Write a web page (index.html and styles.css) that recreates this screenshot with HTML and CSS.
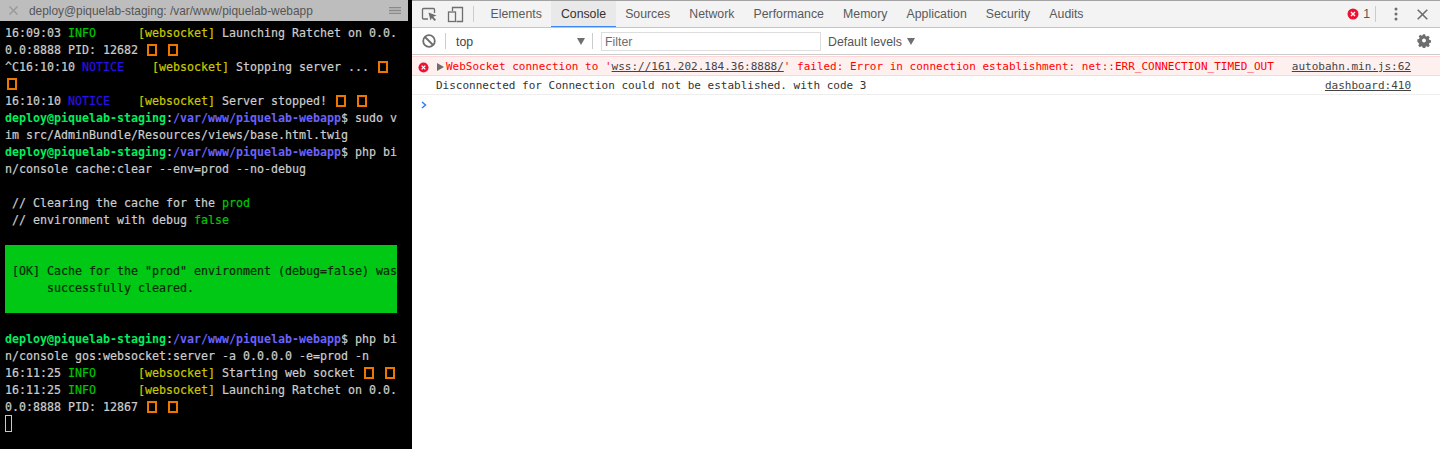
FILE: index.html
```html
<!DOCTYPE html>
<html lang="en">
<head>
<meta charset="utf-8">
<title>Terminal and DevTools</title>
<link rel="stylesheet" href="styles.css">
</head>
<body>
<div class="app">
  <section class="term">
    <header class="term-bar">
      <svg class="term-x" width="9" height="9" viewBox="0 0 9 9"><path d="M.5.5l8 8M8.500.5l-8 8" stroke="#9b9b9b" stroke-width="1.500"/></svg>
      <span class="term-title">deploy@piquelab-staging: /var/www/piquelab-webapp</span>
      <svg class="term-menu" width="12" height="7" viewBox="0 0 12 7"><path d="M0 .7h12M0 3.500h12M0 6.300h12" stroke="#8a8a8a" stroke-width="1.300"/></svg>
    </header>
    <div class="term-body">
      <div class="ln">16:09:03 <span class="g">INFO</span>      <span class="y">[websocket]</span> Launching Ratchet on 0.0.</div>
      <div class="ln">0.0:8888 PID: 12682 <i class="sq"></i> <i class="sq"></i></div>
      <div class="ln">^C16:10:10 <span class="b">NOTICE</span>    <span class="y">[websocket]</span> Stopping server ... <i class="sq"></i></div>
      <div class="ln"><i class="sq"></i></div>
      <div class="ln">16:10:10 <span class="b">NOTICE</span>    <span class="y">[websocket]</span> Server stopped! <i class="sq"></i> <i class="sq"></i></div>
      <div class="ln"><b class="u">deploy@piquelab-staging</b>:<b class="p">/var/www/piquelab-webapp</b>$ sudo v</div>
      <div class="ln">im src/AdminBundle/Resources/views/base.html.twig</div>
      <div class="ln"><b class="u">deploy@piquelab-staging</b>:<b class="p">/var/www/piquelab-webapp</b>$ php bi</div>
      <div class="ln">n/console cache:clear --env=prod --no-debug</div>
      <div class="ln"> </div>
      <div class="ln"> // Clearing the cache for the <span class="g">prod</span></div>
      <div class="ln"> // environment with debug <span class="g">false</span></div>
      <div class="ln"> </div>
      <div class="ok">
        <div class="ln"> </div>
        <div class="ln"> [OK] Cache for the "prod" environment (debug=false) was</div>
        <div class="ln">      successfully cleared.</div>
        <div class="ln"> </div>
      </div>
      <div class="ln"> </div>
      <div class="ln"><b class="u">deploy@piquelab-staging</b>:<b class="p">/var/www/piquelab-webapp</b>$ php bi</div>
      <div class="ln">n/console gos:websocket:server -a 0.0.0.0 -e=prod -n</div>
      <div class="ln">16:11:25 <span class="g">INFO</span>      <span class="y">[websocket]</span> Starting web socket <i class="sq"></i> <i class="sq"></i></div>
      <div class="ln">16:11:25 <span class="g">INFO</span>      <span class="y">[websocket]</span> Launching Ratchet on 0.0.</div>
      <div class="ln">0.0:8888 PID: 12867 <i class="sq"></i> <i class="sq"></i></div>
      <div class="ln"><i class="cursor"></i></div>
    </div>
  </section>
  <section class="dt">
    <nav class="dt-tabs">
      <svg class="ic-inspect" width="17" height="17" viewBox="0 0 17 17"><path d="M7 13H2.500a1 1 0 0 1-1-1V3.500a1 1 0 0 1 1-1h10a1 1 0 0 1 1 1V7" fill="none" stroke="#6e6e6e" stroke-width="1.300"/><path d="M7.500 6.500l8 3-3.300 1.300 2.800 3-1.400 1.300-2.800-3L9.500 14.500z" fill="#6e6e6e"/></svg>
      <svg class="ic-device" width="17" height="17" viewBox="0 0 17 17"><path d="M5.500 5V1.500h10v14h-6" fill="none" stroke="#6e6e6e" stroke-width="1.300"/><rect x="1.500" y="6" width="7" height="9.500" fill="none" stroke="#6e6e6e" stroke-width="1.300"/></svg>
      <span class="vsep"></span>
      <a class="tab">Elements</a>
      <a class="tab active">Console</a>
      <a class="tab">Sources</a>
      <a class="tab">Network</a>
      <a class="tab">Performance</a>
      <a class="tab">Memory</a>
      <a class="tab">Application</a>
      <a class="tab">Security</a>
      <a class="tab">Audits</a>
      <span class="grow"></span>
      <svg class="err-dot" width="12" height="12" viewBox="0 0 12 12"><circle cx="6" cy="6" r="5.500" fill="#ee1133"/><path d="M4 4l4 4M8 4l-4 4" stroke="#fff" stroke-width="1.400"/></svg>
      <span class="err-count">1</span>
      <span class="vsep vsep-r"></span>
      <svg class="ic-more" width="4" height="14" viewBox="0 0 4 14"><circle cx="2" cy="2" r="1.500" fill="#6e6e6e"/><circle cx="2" cy="7" r="1.500" fill="#6e6e6e"/><circle cx="2" cy="12" r="1.500" fill="#6e6e6e"/></svg>
      <svg class="ic-close" width="11" height="11" viewBox="0 0 11 11"><path d="M.7.7l9.600 9.600M10.300.7L.7 10.300" stroke="#6e6e6e" stroke-width="1.600"/></svg>
    </nav>
    <div class="dt-tools">
      <svg class="ic-clear" width="14" height="14" viewBox="0 0 14 14"><circle cx="7" cy="7" r="5.800" fill="none" stroke="#6e6e6e" stroke-width="1.800"/><path d="M3 3l8 8" stroke="#6e6e6e" stroke-width="1.800"/></svg>
      <span class="vsep vsep-t1"></span>
      <span class="ctx">top</span>
      <span class="tri tri-ctx"></span>
      <span class="vsep vsep-t2"></span>
      <span class="filter">Filter</span>
      <span class="levels">Default levels</span>
      <span class="tri tri-lv"></span>
      <span class="grow"></span>
      <svg class="ic-gear" width="14" height="14" viewBox="0 0 14 14"><path fill="#6e6e6e" fill-rule="evenodd" d="M5.700 0h2.600l.4 1.900 1.300.6 1.700-1 1.800 1.800-1 1.700.6 1.300 1.900.4v2.600l-1.900.4-.6 1.300 1 1.700-1.800 1.800-1.700-1-1.300.6-.4 1.900H5.700l-.4-1.900-1.300-.6-1.700 1-1.800-1.800 1-1.700-.6-1.300L-.5 8.300V5.700l1.900-.4.600-1.300-1-1.700 1.800-1.800 1.700 1 1.300-.6zM7 4.800a2.200 2.200 0 1 0 0 4.400 2.200 2.200 0 0 0 0-4.400z" transform="translate(.8 .3) scale(.886)"/></svg>
    </div>
    <div class="row row-err">
      <svg class="row-dot" width="11" height="11" viewBox="0 0 12 12"><circle cx="6" cy="6" r="5.500" fill="#ee1133"/><path d="M4 4l4 4M8 4l-4 4" stroke="#fff" stroke-width="1.400"/></svg>
      <span class="tri-r"></span>
      <span class="msg">WebSocket connection to '<u class="link">wss://161.202.184.36:8888/</u>' failed: Error in connection establishment: net::ERR_CONNECTION_TIMED_OUT</span>
      <u class="src">autobahn.min.js:62</u>
    </div>
    <div class="row row-log">
      <span class="msg">Disconnected for Connection could not be established. with code 3</span>
      <u class="src">dashboard:410</u>
    </div>
    <div class="prompt"><svg width="6" height="8" viewBox="0 0 6 8"><path d="M1 1l3.500 3L1 7" fill="none" stroke="#367cf1" stroke-width="1.500"/></svg></div>
  </section>
</div>
</body>
</html>
```
FILE: styles.css
```css
html, body { margin: 0; height: 100%; background: #fff; overflow: hidden; }
.app { display: flex; height: 449px; }
.term { width: 412px; flex: none; background: #000; display: flex; flex-direction: column; overflow: hidden; }
.term-bar { flex: none; height: 21px; width: 408px; background: #bdbdbd; display: flex; align-items: center; font: 11.9px "Liberation Sans", Arial, sans-serif; color: #555; }
.term-x { margin-left: 9px; }
.term-title { margin-left: 11px; }
.term-menu { margin-left: auto; margin-right: 7px; }
.term-body { padding: 3px 0 0 5px; width: 392px; font: 11.63px/19px "DejaVu Sans Mono", monospace; color: #cdcdcd; -webkit-text-stroke: .2px; }
.ln { height: 17px; white-space: pre; }
.g { color: #00c800; }
.y { color: #c9c700; }
.b { color: #2a10e8; }
.u { color: #00ee5e; font-weight: bold; -webkit-text-stroke: 0; }
.p { color: #6a62ff; font-weight: bold; -webkit-text-stroke: 0; }
.sq { display: inline-block; box-sizing: border-box; width: 10px; height: 12px; margin: 0 2px; border: 2px solid #ee7500; vertical-align: -2px; }
.cursor { display: inline-block; box-sizing: border-box; width: 7px; height: 17px; border: 1px solid #c9c9c9; vertical-align: top; }
.ok { background: #00c814; color: #0a2a0a; width: 392px; }
.dt { flex: 1; min-width: 0; font: 12.3px "Liberation Sans", Arial, sans-serif; color: #333; }
.dt-tabs { height: 26px; background: #f3f3f3; border-top: 1px solid #a3a3a3; border-bottom: 1px solid #c4c4c4; display: flex; align-items: center; }
.ic-inspect { margin-left: 9px; }
.ic-device { margin-left: 9px; }
.vsep { width: 1px; height: 16px; background: #ccc; flex: none; }
.dt-tabs > .vsep { margin-left: 9px; margin-right: 7px; }
.tab { height: 26px; line-height: 26px; padding: 0 9.550px; color: #5a5a5a; box-sizing: border-box; white-space: nowrap; }
.tab.active { background: #e9e9e9; color: #333; border-bottom: 1px solid #3d84f5; }
.grow { flex: 1; }
.err-count { margin-left: 4px; color: #555; }
.dt-tabs > .vsep-r { margin-left: 5px; margin-right: 0; }
.ic-more { margin-left: 18px; }
.ic-close { margin-left: 19px; margin-right: 12px; }
.dt-tools { height: 26px; display: flex; align-items: center; border-bottom: 1px solid #ccc; background: #fff; }
.ic-clear { margin-left: 10px; }
.vsep-t1 { margin-left: 9px; }
.ctx { margin-left: 10px; padding-top: 2px; color: #444; }
.tri { width: 0; height: 0; border-left: 4px solid transparent; border-right: 4px solid transparent; border-top: 7px solid #6e6e6e; }
.tri-ctx { margin-left: 104px; }
.vsep-t2 { margin-left: 7px; }
.filter { margin-left: 8px; width: 215px; height: 17px; line-height: 19px; padding-left: 3px; border: 1px solid #ddd; color: #6e6e6e; }
.levels { margin-left: 7px; padding-top: 2px; color: #555; }
.tri-lv { margin-left: 5px; }
.ic-gear { margin-right: 9px; }
.row { display: flex; align-items: center; box-sizing: border-box; padding-top: 2px; font: 11px/16px "DejaVu Sans Mono", monospace; white-space: pre; }
.row-err { height: 20px; margin-top: 1px; background: #fff0f0; color: #f00; border-top: 1px solid #ffd6d6; border-bottom: 1px solid #ffd6d6; }
.row-log { height: 19px; border-bottom: 1px solid #eee; color: #333; padding-left: 24px; }
.row-dot { margin-left: 6px; }
.tri-r { width: 0; height: 0; margin-left: 8px; margin-right: 2px; border-top: 4px solid transparent; border-bottom: 4px solid transparent; border-left: 7px solid #6e6e6e; }
.link { color: #444; }
.src { margin-left: auto; margin-right: 29px; color: #444; }
.prompt { padding: 6px 0 0 9px; height: 10px; line-height: 0; }
```
